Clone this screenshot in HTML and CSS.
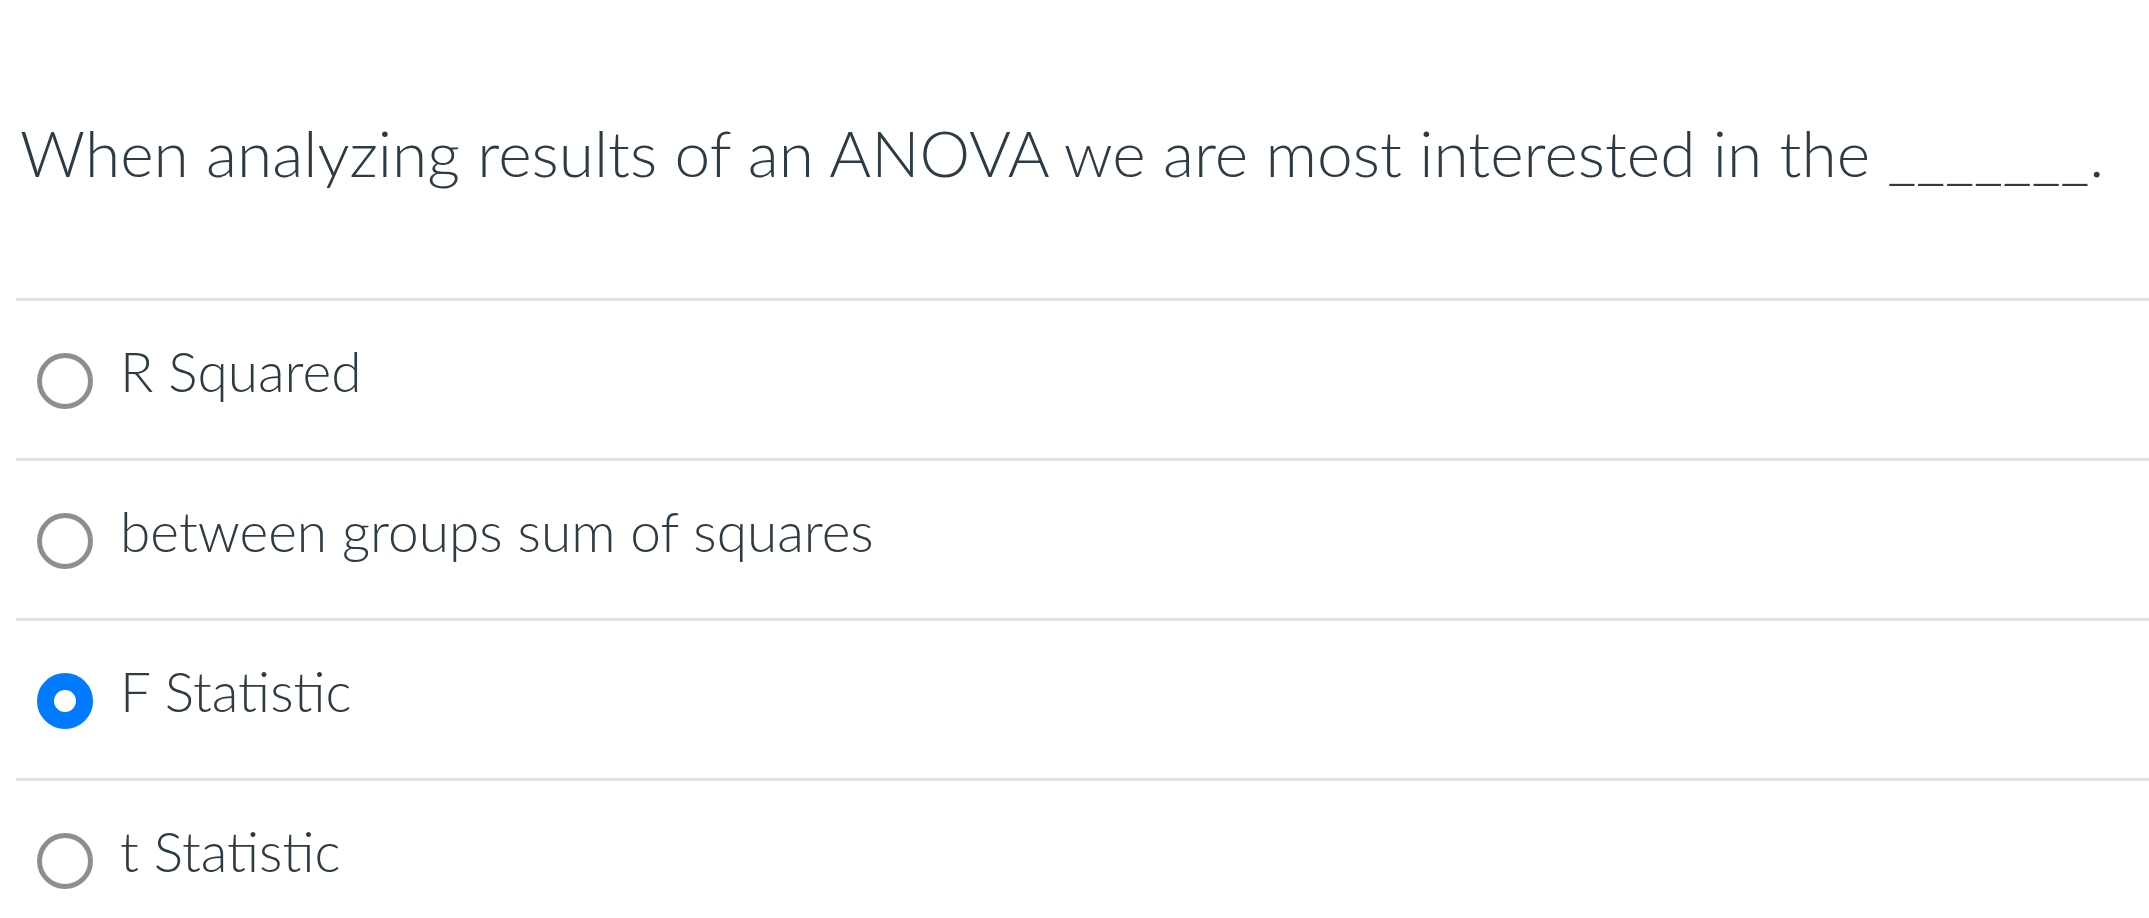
FILE: index.html
```html
<!DOCTYPE html>
<html lang="en">
<head>
    <meta charset="UTF-8">
    <title>Quiz question</title>
    <link rel="stylesheet" href="styles.css">
</head>
<body>
    <div class="question">
        <p class="question-text">When analyzing results of an ANOVA we are most interested in the _______.</p>
        <div class="answers">
            <label class="answer">
                <span class="radio"></span>
                <span class="answer-text">R Squared</span>
            </label>
            <label class="answer">
                <span class="radio"></span>
                <span class="answer-text">between groups sum of squares</span>
            </label>
            <label class="answer">
                <span class="radio checked"></span>
                <span class="answer-text">F Statistic</span>
            </label>
            <label class="answer">
                <span class="radio"></span>
                <span class="answer-text">t Statistic</span>
            </label>
        </div>
    </div>
</body>
</html>
```

FILE: styles.css
```css
body {
    margin: 0;
    background: #fff;
    font-family: Lato, "Open Sans", sans-serif;
    font-weight: 300;
    color: #2d3b45;
    overflow: hidden;
}
.question {
    padding-left: 16px;
}
.question-text {
    margin: 0;
    padding: 115px 0 0 4px;
    height: 298px;
    box-sizing: border-box;
    font-size: 64px;
    line-height: 1.2;
}
.answers {
    display: flex;
    flex-direction: column;
}
.answer {
    display: flex;
    align-items: flex-start;
    height: 160px;
    box-sizing: border-box;
    border-top: 3px solid #e2e2e2;
    padding-left: 21px;
}
.radio {
    width: 56px;
    height: 56px;
    box-sizing: border-box;
    border: 5px solid #8e8e8e;
    border-radius: 50%;
    margin-top: 52px;
    flex-shrink: 0;
}
.radio.checked {
    border: 17px solid #007aff;
}
.answer-text {
    padding-top: 37px;
    margin-left: 27px;
    font-size: 55px;
    line-height: 1.2;
}
```
